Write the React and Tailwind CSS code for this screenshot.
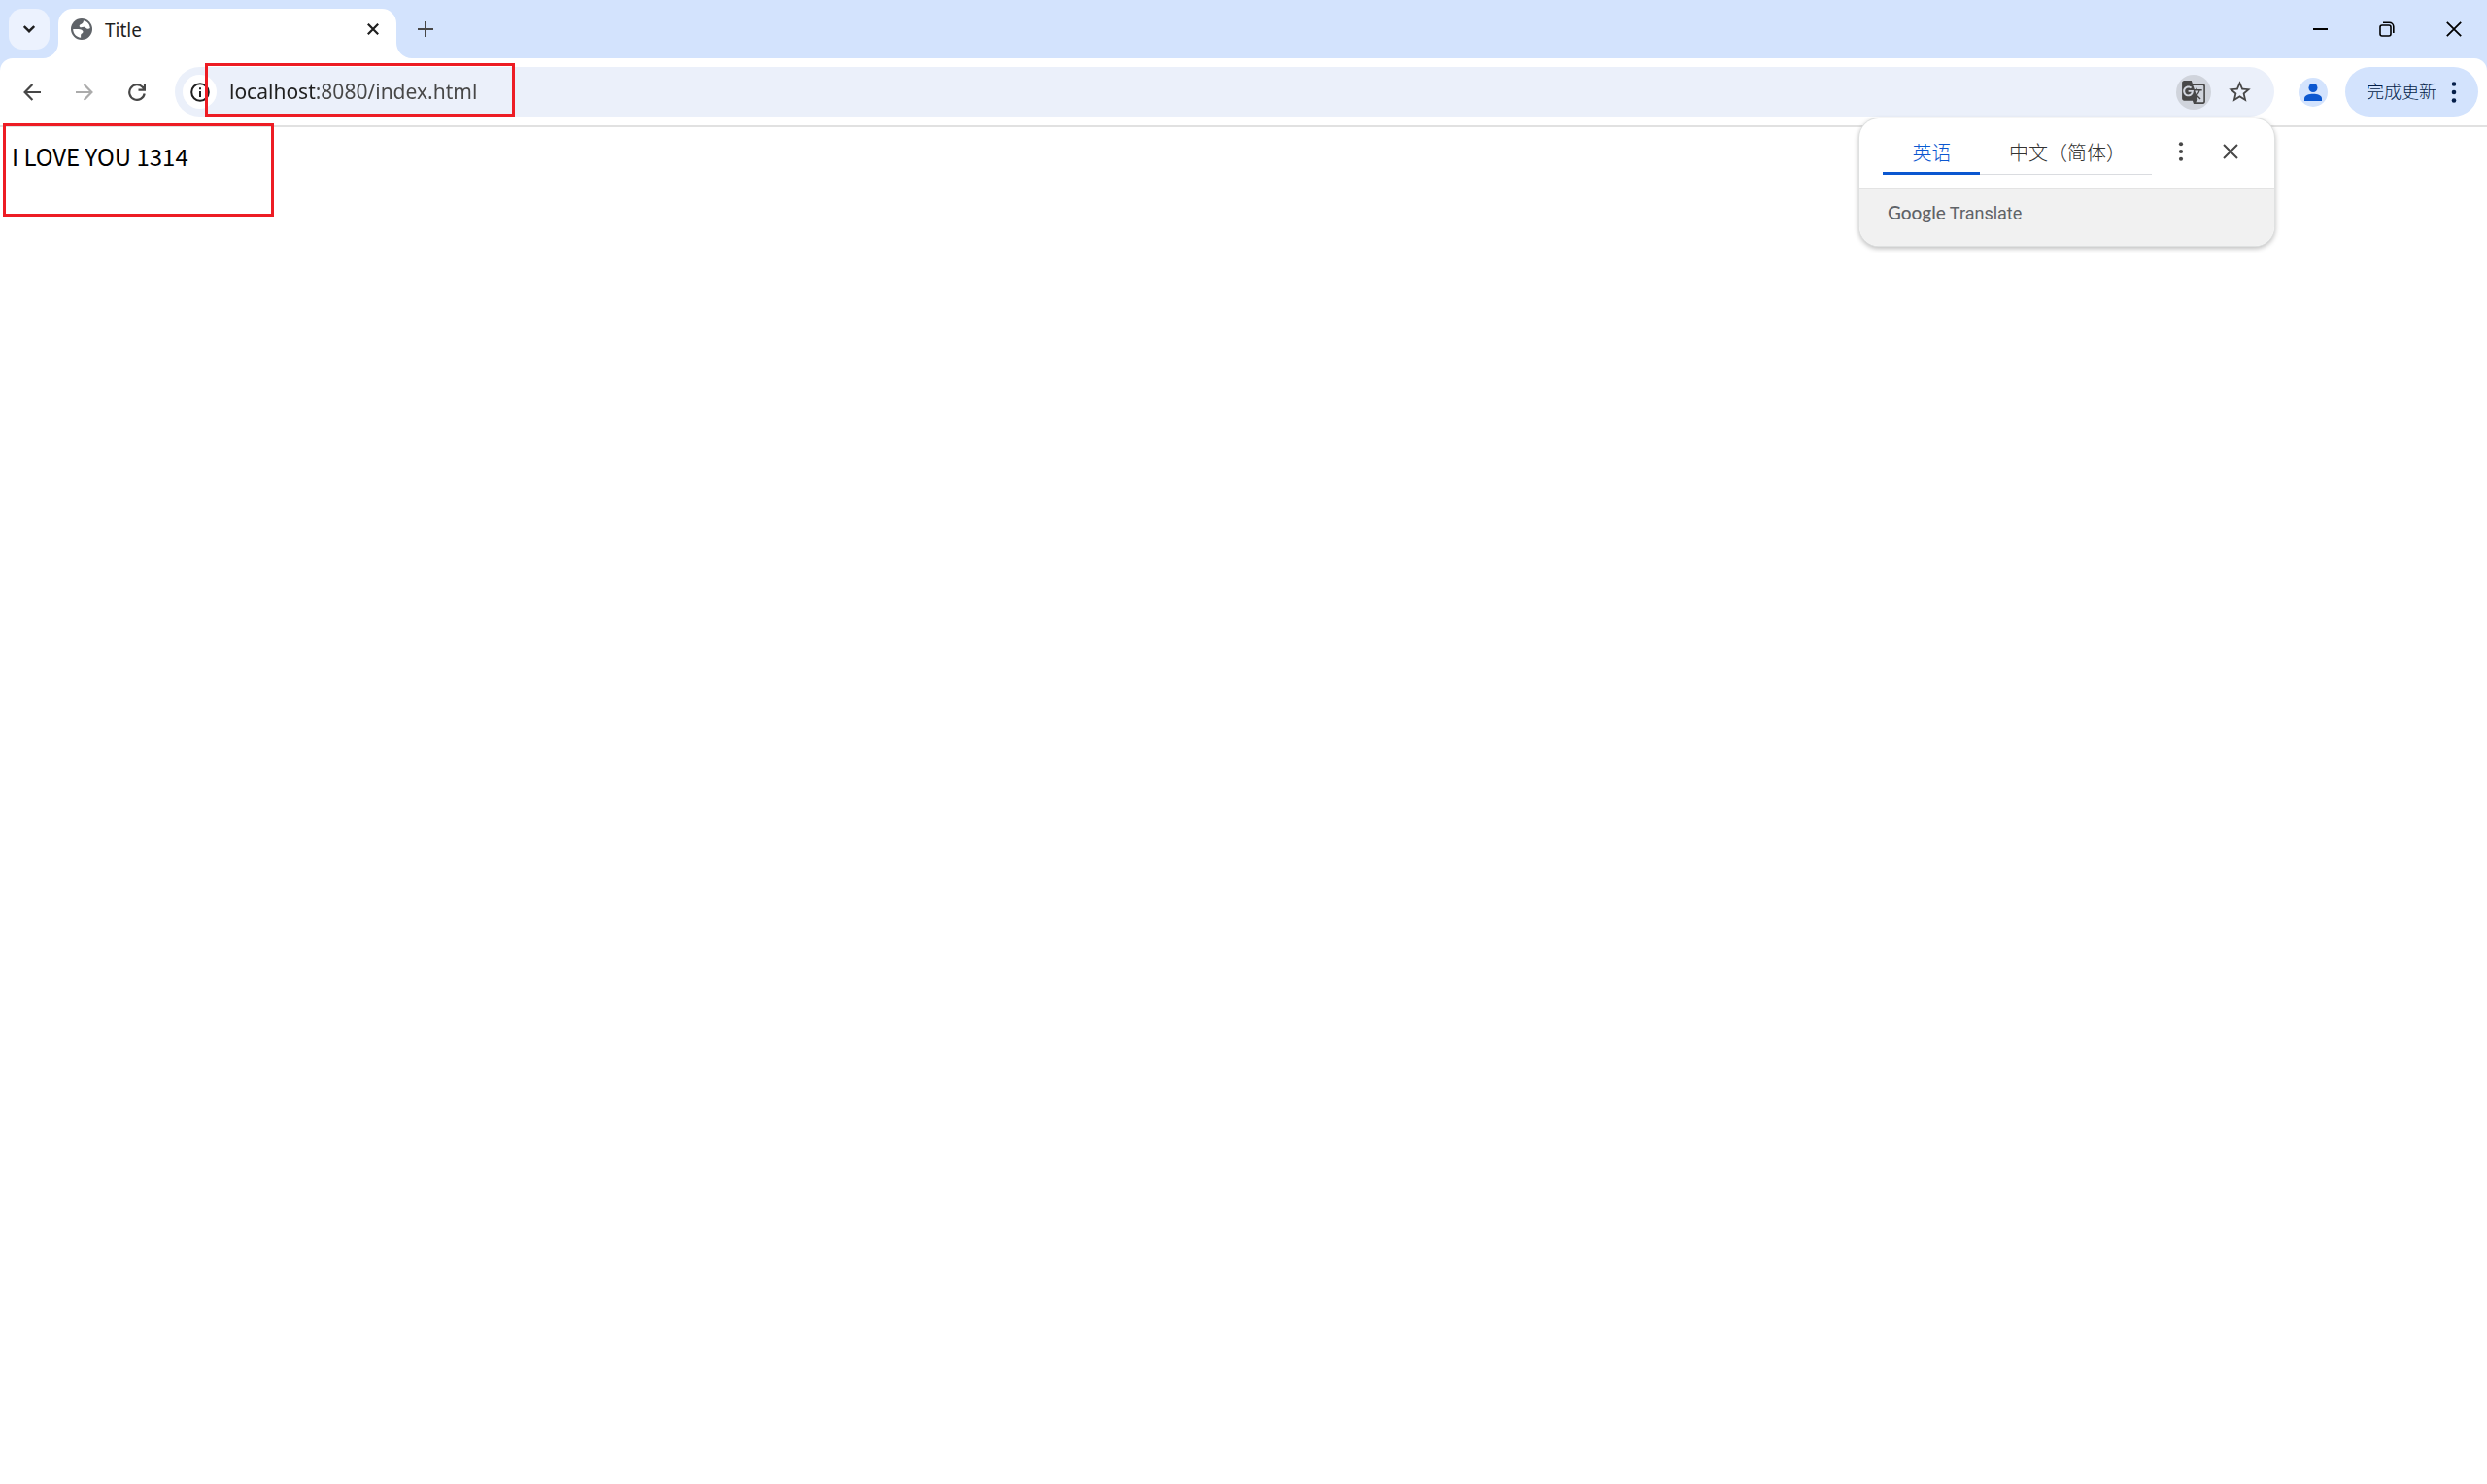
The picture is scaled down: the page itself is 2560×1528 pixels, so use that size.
const ui = "font-['Noto_Sans','Noto_Sans_CJK_SC',sans-serif]";

function Icon({ className, children, box = 24 }) {
  return (
    <svg viewBox={`0 0 ${box} ${box}`} className={className} fill="currentColor" aria-hidden="true">
      {children}
    </svg>
  );
}

function Flare({ className, d }) {
  return (
    <svg viewBox="0 0 16 16" className={className} fill="currentColor" aria-hidden="true">
      <path d={d} />
    </svg>
  );
}

function TabStrip() {
  return (
    <header className="flex h-[60px] items-start bg-[#d3e3fd] pl-[9px] pt-[9px]">
      <button aria-label="Search tabs" className="flex size-[42px] items-center justify-center rounded-[14px] bg-[#ecf2fe] text-[#1f1f1f]">
        <svg viewBox="0 0 12 8" className="h-2 w-3" fill="none" stroke="currentColor" strokeWidth="2.4" aria-hidden="true">
          <path d="M.8 1 6 6.2 11.2 1" />
        </svg>
      </button>
      <div className="relative ml-[9px] flex h-[51px] w-[348px] items-center rounded-t-[15px] bg-white pb-[9px] pl-[13px] pr-[16px]">
        <Flare className="absolute -left-4 bottom-0 size-4 text-white" d="M16 0v16H0A16 16 0 0 0 16 0z" />
        <Flare className="absolute -right-4 bottom-0 size-4 text-white" d="M0 0v16h16A16 16 0 0 1 0 0z" />
        <Icon className="size-[22px] text-[#5f6368]" box={20}>
          <circle cx="10" cy="10" r="10" />
          <path fill="#fff" d="M11.800 2C15.500 2.800 17.800 5.500 18 9.200C16.500 10.300 14.800 9.800 13.600 8.600C12.600 7.600 10.800 8.300 9.400 8.300C7.600 8.300 7.400 6.300 9 5.600C10.800 4.900 11.600 4 11.800 2z" />
          <path fill="#fff" d="M2 10H7c2.200 0 4.400 1 4.400 2.600c0 1.500-2.200 1.500-2.200 3v2.300C5 17.600 2 14.200 2 10z" />
        </Icon>
        <span className="ml-[13px] mt-px text-[19px] leading-6 text-[#1f1f1f]">Title</span>
        <button aria-label="Close tab" className="ml-auto flex size-4 items-center justify-center text-[#1f1f1f]">
          <svg viewBox="0 0 12 12" className="size-3" stroke="currentColor" strokeWidth="2.2" aria-hidden="true">
            <path d="M.8.8l10.400 10.400M11.200.8.8 11.200" />
          </svg>
        </button>
      </div>
      <button aria-label="New tab" className="ml-[9px] flex size-[42px] items-center justify-center text-[#474747]">
        <svg viewBox="0 0 16 16" className="size-4" stroke="currentColor" strokeWidth="2" aria-hidden="true">
          <path d="M8 0v16M0 8h16" />
        </svg>
      </button>
      <div className="-mt-[9px] ml-auto flex h-[60px] text-black">
        <button aria-label="Minimize" className="flex w-[67px] items-center justify-center">
          <span className="h-0.5 w-[15px] bg-black" />
        </button>
        <button aria-label="Restore" className="flex w-[69px] items-center justify-center">
          <svg viewBox="0 0 16 16" className="size-4" fill="none" stroke="currentColor" strokeWidth="1.600" aria-hidden="true">
            <rect x="1" y="4" width="11" height="11" rx="2" />
            <path d="M4 1.200h6.500A4.300 4.300 0 0 1 14.800 5.500V12" />
          </svg>
        </button>
        <button aria-label="Close window" className="flex w-[69px] items-center justify-center">
          <svg viewBox="0 0 16 16" className="size-4" stroke="currentColor" strokeWidth="1.800" aria-hidden="true">
            <path d="M.8.8l14.400 14.400M15.200.8.8 15.200" />
          </svg>
        </button>
      </div>
    </header>
  );
}

function Dots({ className }) {
  return (
    <svg viewBox="0 0 6 22" className={className} fill="currentColor" aria-hidden="true">
      <circle cx="3" cy="2.500" r="2.300" />
      <circle cx="3" cy="11" r="2.300" />
      <circle cx="3" cy="19.500" r="2.300" />
    </svg>
  );
}

function TranslatePopup() {
  return (
    <section aria-label="Translate" className="absolute right-0 top-[53px] z-10 w-[427px] overflow-hidden rounded-[20px] bg-white shadow-[0_0_0_1px_#dfe1e1,0_2px_5px_1px_rgba(0,0,0,0.25)]">
      <div className="flex h-[73px] items-start border-b border-[#e3e3e3] pl-6 pr-[35px] pt-[15px]">
        <div className="flex h-[43px] text-[20px] leading-[40px]">
          <button className="w-[100px] border-b-[3px] border-[#0b57d0] pl-px pt-px font-light text-[#0b57d0]">英语</button>
          <button className="w-[177px] border-b border-[#dadce0] pl-[3px] font-light text-[#333]">中文（简体）</button>
        </div>
        <button aria-label="Translate options" className="ml-[20px] flex h-[38px] w-5 items-center justify-center text-[#474747]">
          <Dots className="h-[20px] w-[6px]" />
        </button>
        <button aria-label="Close" className="ml-auto flex h-[38px] w-5 items-center justify-center text-[#474747]">
          <svg viewBox="0 0 16 16" className="size-4" stroke="currentColor" strokeWidth="2" aria-hidden="true">
            <path d="M1 1l14 14M15 1 1 15" />
          </svg>
        </button>
      </div>
      <div className="flex h-[58px] items-baseline gap-1 bg-[#f1f1f1] pl-[29px] pt-3 leading-6 text-[#5f6368]">
        <span className="font-['Lato',sans-serif] text-[19px] font-medium">Google</span>
        <span className="font-['Roboto',sans-serif] text-[18px]">Translate</span>
      </div>
    </section>
  );
}

function Toolbar() {
  return (
    <div className="bg-[#d3e3fd]">
      <nav className="flex h-[71px] items-start rounded-t-[13px] border-b-2 border-[#e1e1e1] bg-white pr-[9px] pt-[9px]">
        <div className="flex h-[51px] w-[180px] items-center pl-[6px]">
          <button aria-label="Back" className="flex w-[54px] justify-center text-[#474747]">
            <svg viewBox="0 0 18 18" className="size-[18px]" fill="none" stroke="currentColor" strokeWidth="2.200" aria-hidden="true">
              <path d="M18 9H1.800M9.400 1 1.600 9l7.800 8" />
            </svg>
          </button>
          <button aria-label="Forward" disabled className="flex w-[54px] justify-center text-[#ababab]">
            <svg viewBox="0 0 18 18" className="size-[18px]" fill="none" stroke="currentColor" strokeWidth="2.200" aria-hidden="true">
              <path d="M0 9h16.200M8.600 1l7.800 8-7.800 8" />
            </svg>
          </button>
          <button aria-label="Reload" className="flex w-[54px] justify-center text-[#474747]">
            <svg viewBox="0 0 18 18" className="size-[18px]" fill="none" stroke="currentColor" strokeWidth="2.200" aria-hidden="true">
              <path d="M16.700 10.500A7.800 7.800 0 1 1 14.800 3.800l2 2.400M17 0v6.700h-6.500" />
            </svg>
          </button>
        </div>
        <div className="relative flex h-[51px] min-w-0 flex-1 items-center rounded-full bg-[#ebf0fa] pl-2 pr-[22px]">
          <button aria-label="View site information" className="flex size-[35px] items-center justify-center rounded-full bg-white text-[#1f1f1f]">
            <svg viewBox="0 0 20 20" className="size-5" fill="none" stroke="currentColor" strokeWidth="2" aria-hidden="true">
              <circle cx="10" cy="10" r="8.800" />
              <path d="M10 9v6M10 5.300v2" />
            </svg>
          </button>
          <input
            aria-label="Address"
            defaultValue="localhost:8080/index.html"
            className="mb-[2px] ml-[13px] h-8 min-w-0 flex-1 bg-[linear-gradient(90deg,#1f1f1f_90px,#474747_90px)] bg-clip-text text-[21px] text-transparent outline-none"
          />
          <button aria-label="Translate this page" className="flex size-9 items-center justify-center rounded-full bg-[#d0d4dc] text-[#474747]">
            <Icon className="size-[26px]">
              <path d="M21 4H11l-1-3H3c-1.100 0-2 .9-2 2v15c0 1.100.9 2 2 2h8l1 3h9c1.100 0 2-.9 2-2V6c0-1.100-.9-2-2-2zM7 16c-2.760 0-5-2.240-5-5s2.240-5 5-5c1.350 0 2.480.5 3.350 1.300L9.030 8.570c-.38-.36-1.040-.78-2.030-.78-1.740 0-3.150 1.440-3.150 3.210S5.260 14.210 7 14.210c2.010 0 2.840-1.440 2.920-2.410H7v-1.710h4.680c.7.310.12.610.12 1.020C11.800 13.970 9.890 16 7 16zm6.170-5.420h3.700c-.43 1.250-1.110 2.430-2.050 3.470-.31-.35-.6-.72-.86-1.100l-.79-2.370zm8.330 9.920c0 .55-.45 1-1 1H14l2-2.500-1.040-3.100 3.100 3.100.92-.92-3.300-3.250.02-.02c1.130-1.250 1.930-2.690 2.400-4.220H20v-1.300h-4.530V8h-1.290v1.290h-1.440L11.460 5.500h9.040c.55 0 1 .45 1 1v14z" />
            </Icon>
          </button>
          <button aria-label="Bookmark this page" className="ml-[16px] flex text-[#474747]">
            <Icon className="size-[27px]">
              <path d="M22 9.240l-7.190-.62L12 2 9.190 8.630 2 9.240l5.460 4.730L5.820 21 12 17.270 18.180 21l-1.630-7.030L22 9.240zM12 15.400l-3.760 2.270 1-4.280-3.320-2.880 4.380-.38L12 6.100l1.710 4.040 4.380.38-3.320 2.880 1 4.280L12 15.400z" />
            </Icon>
          </button>
          <span aria-hidden="true" className="pointer-events-none absolute -top-1 left-[31px] h-[55px] w-[319px] border-[3px] border-[#ed1c24]" />
          <TranslatePopup />
        </div>
        <div className="flex h-[51px] items-center pl-[25px]">
          <button aria-label="Profile" className="flex size-[30px] items-center justify-center rounded-full bg-[#d3e3fd] text-[#0b57d0]">
            <svg viewBox="0 0 18 18" className="size-[18px]" fill="currentColor" aria-hidden="true">
              <circle cx="9" cy="4.500" r="4.500" />
              <path d="M0 18v-2.500C0 12 5 10.700 9 10.700s9 1.300 9 4.800V18z" />
            </svg>
          </button>
          <button className="ml-[18px] flex h-[51px] w-[137px] items-center rounded-full bg-[#d3e3fd] pl-[22px] text-[18px] text-[#041e49]">
            <span className="font-light">完成更新</span>
            <Dots className="ml-[15px] h-[22px] w-[6px]" />
          </button>
        </div>
      </nav>
    </div>
  );
}

export default function App() {
  return (
    <div className={`min-h-screen bg-white ${ui}`}>
      <TabStrip />
      <Toolbar />
      <main className="relative px-3 pt-3 font-['Noto_Sans_CJK_SC',sans-serif] text-[24px] leading-9 text-black">
        <p>I LOVE YOU 1314</p>
        <span aria-hidden="true" className="pointer-events-none absolute -top-1 left-[3px] h-24 w-[279px] border-[3px] border-[#ed1c24]" />
      </main>
    </div>
  );
}
